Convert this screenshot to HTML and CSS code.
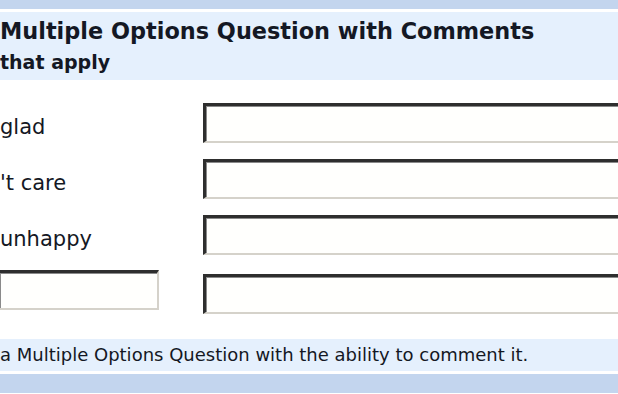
FILE: index.html
```html
<!DOCTYPE html>
<html>
<head>
<meta charset="utf-8">
<link rel="stylesheet" href="styles.css">
</head>
<body>
<div class="page">
  <div class="topbar"></div>
  <div class="header">
    <div class="title">Multiple Options Question with Comments</div>
    <div class="subtitle">that apply</div>
  </div>
  <div class="rows">
    <div class="row">
      <div class="label">glad</div>
      <div class="field"></div>
    </div>
    <div class="row">
      <div class="label">'t care</div>
      <div class="field"></div>
    </div>
    <div class="row">
      <div class="label">unhappy</div>
      <div class="field"></div>
    </div>
    <div class="row row-other">
      <div class="label"><div class="field field-other"></div></div>
      <div class="field field-shift"></div>
    </div>
  </div>
  <div class="footer">a Multiple Options Question with the ability to comment it.</div>
  <div class="bottombar"></div>
</div>
</body>
</html>
```

FILE: styles.css
```css
html, body {
  margin: 0;
  padding: 0;
  background: #ffffff;
  overflow: hidden;
}
.page {
  width: 618px;
  height: 394px;
  overflow: hidden;
  font-family: "DejaVu Sans", Verdana, sans-serif;
  color: #141824;
}
.topbar {
  height: 9px;
  background: #c3d5ee;
  border-bottom: 3px solid #ffffff;
}
.header {
  height: 68px;
  box-sizing: border-box;
  background: #e5f0fd;
  padding-top: 4px;
}
.title {
  font-weight: bold;
  font-size: 22.4px;
  line-height: 30px;
  white-space: nowrap;
}
.subtitle {
  margin-top: 5px;
  font-weight: bold;
  font-size: 19px;
  line-height: 22px;
  white-space: nowrap;
}
.rows {
  display: flex;
  flex-direction: column;
  gap: 16px;
  padding-top: 23px;
}
.row {
  display: flex;
  align-items: center;
  height: 40px;
}
.label {
  width: 203px;
  flex: none;
  font-size: 21px;
  padding-top: 8px;
  white-space: nowrap;
}
.field {
  flex: none;
  width: 460px;
  height: 40px;
  box-sizing: border-box;
  background: #fffffd;
  border-style: solid;
  border-width: 3px 2px 2px 3px;
  border-color: #2e2e2e #d5d2ca #d5d2ca #2e2e2e;
  box-shadow: inset 1px 1px 0 #8a8a8a;
}
.row-other {
  align-items: flex-start;
}
.row-other .label {
  padding-top: 0;
}
.field-other {
  width: 159px;
  height: 40px;
  margin-top: -1px;
  border-left: none;
}
.field-shift {
  margin-top: 3px;
}
.footer {
  margin-top: 28px;
  height: 32px;
  line-height: 32px;
  background: #e5f0fd;
  font-size: 18px;
  white-space: nowrap;
}
.bottombar {
  height: 19px;
  background: #c3d5ee;
  border-top: 3px solid #ffffff;
}
```
